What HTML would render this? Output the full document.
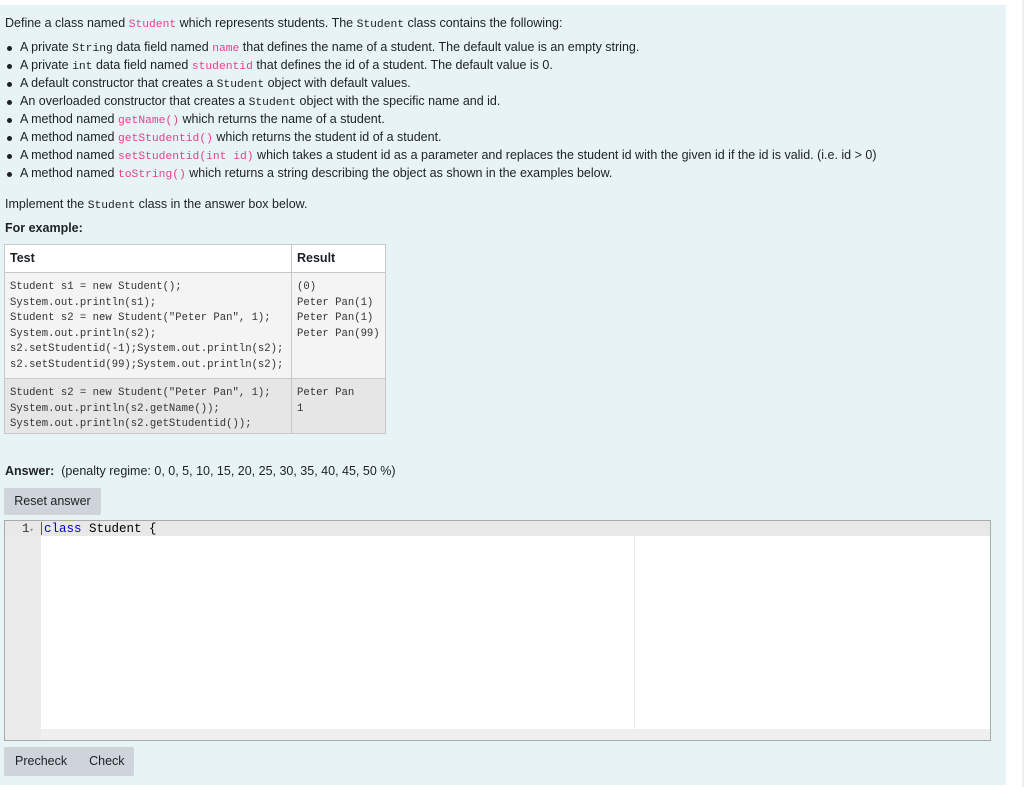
<!DOCTYPE html><html><head><style>
body{margin:0;width:1024px;height:787px;background:#fff;font-family:"Liberation Sans",sans-serif;font-size:12.5px;color:#1d2125;position:relative;overflow:hidden}
.panel{position:absolute;left:0;top:5px;width:1006px;height:780px;background:#e7f3f5}
.t{position:absolute;left:5px;white-space:nowrap}
.c{font-family:"Liberation Mono",monospace;font-size:11.3px}
.p{color:#e83e8c}
.li{position:absolute;left:5px;white-space:nowrap}
.li:before{content:"";position:absolute;left:2px;top:6px;width:5px;height:5px;border-radius:50%;background:#1d2125}
.li span.x{margin-left:15px}
table{position:absolute;left:4px;top:244px;border-collapse:collapse;font-size:12.5px}
td,th{border:1px solid #c8c8c8;vertical-align:top;text-align:left;padding:7px 5px 0 5px}
th{background:#fff;height:21px;padding-top:6px}
pre{margin:0;font-family:"Liberation Mono",monospace;font-size:10.6px;line-height:15.5px;color:#333}
.btn{position:absolute;background:#ced4da;color:#1d2125;font-size:12.5px;border-radius:2px}
</style></head><body>
<div class="panel"></div>
<div class="t" style="top:16px">Define a class named <span class="c p">Student</span> which represents students. The <span class="c">Student</span> class contains the following:</div>
<div class="li" style="top:40px"><span class="x">A private <span class="c">String</span> data field named <span class="c p">name</span> that defines the name of a student. The default value is an empty string.</span></div>
<div class="li" style="top:58px"><span class="x">A private <span class="c">int</span> data field named <span class="c p">studentid</span> that defines the id of a student. The default value is 0.</span></div>
<div class="li" style="top:76px"><span class="x">A default constructor that creates a <span class="c">Student</span> object with default values.</span></div>
<div class="li" style="top:94px"><span class="x">An overloaded constructor that creates a <span class="c">Student</span> object with the specific name and id.</span></div>
<div class="li" style="top:112px"><span class="x">A method named <span class="c p">getName()</span> which returns the name of a student.</span></div>
<div class="li" style="top:130px"><span class="x">A method named <span class="c p">getStudentid()</span> which returns the student id of a student.</span></div>
<div class="li" style="top:148px"><span class="x">A method named <span class="c p">setStudentid(int id)</span> which takes a student id as a parameter and replaces the student id with the given id if the id is valid. (i.e. id &gt; 0)</span></div>
<div class="li" style="top:166px"><span class="x">A method named <span class="c p">toString()</span> which returns a string describing the object as shown in the examples below.</span></div>
<div class="t" style="top:197px">Implement the <span class="c">Student</span> class in the answer box below.</div>
<div class="t" style="top:221px;font-weight:bold">For example:</div>
<table>
<tr><th style="width:276px">Test</th><th style="width:81px">Result</th></tr>
<tr style="background:#f4f4f4"><td style="height:98px"><pre>Student s1 = new Student();
System.out.println(s1);
Student s2 = new Student("Peter Pan", 1);
System.out.println(s2);
s2.setStudentid(-1);System.out.println(s2);
s2.setStudentid(99);System.out.println(s2);</pre></td><td><pre>(0)
Peter Pan(1)
Peter Pan(1)
Peter Pan(99)</pre></td></tr>
<tr style="background:#e6e6e6"><td style="height:47px"><pre>Student s2 = new Student("Peter Pan", 1);
System.out.println(s2.getName());
System.out.println(s2.getStudentid());</pre></td><td><pre>Peter Pan
1</pre></td></tr>
</table>
<div class="t" style="top:464px"><b>Answer:</b>&nbsp; (penalty regime: 0, 0, 5, 10, 15, 20, 25, 30, 35, 40, 45, 50 %)</div>
<div class="btn" style="left:4px;top:488px;width:97px;height:27px;line-height:27px;text-align:center">Reset answer</div>
<div style="position:absolute;left:4px;top:520px;width:985px;height:219px;border:1px solid #aaa;background:#fff">
<div style="position:absolute;left:0;top:0;width:36px;height:219px;background:#ebebeb"></div>
<div style="position:absolute;left:0;top:0;width:985px;height:15px;background:#e8e8e8"></div>
<div style="position:absolute;left:629px;top:15px;width:1px;height:193px;background:#e8e8e8"></div>
<div style="position:absolute;left:36px;top:208px;width:949px;height:11px;background:#efefef"></div>
<div style="position:absolute;left:17px;top:1px;font-family:'Liberation Mono',monospace;font-size:12.5px;line-height:15px;color:#333">1<span style="font-size:7px;color:#888">▾</span></div>
<div style="position:absolute;left:36px;top:1px;width:1px;height:13px;background:#555"></div>
<div style="position:absolute;left:39px;top:1px;font-family:'Liberation Mono',monospace;font-size:12.5px;line-height:15px;color:#000;white-space:pre"><span style="color:#00c">class</span> Student {</div>
</div>
<div class="btn" style="left:4px;top:747px;width:130px;height:29px;line-height:29px"><span style="margin-left:11px">Precheck</span><span style="margin-left:22px">Check</span></div>
<div style="position:absolute;left:1022px;top:0;width:2px;height:787px;background:#eee"></div>
</body></html>
